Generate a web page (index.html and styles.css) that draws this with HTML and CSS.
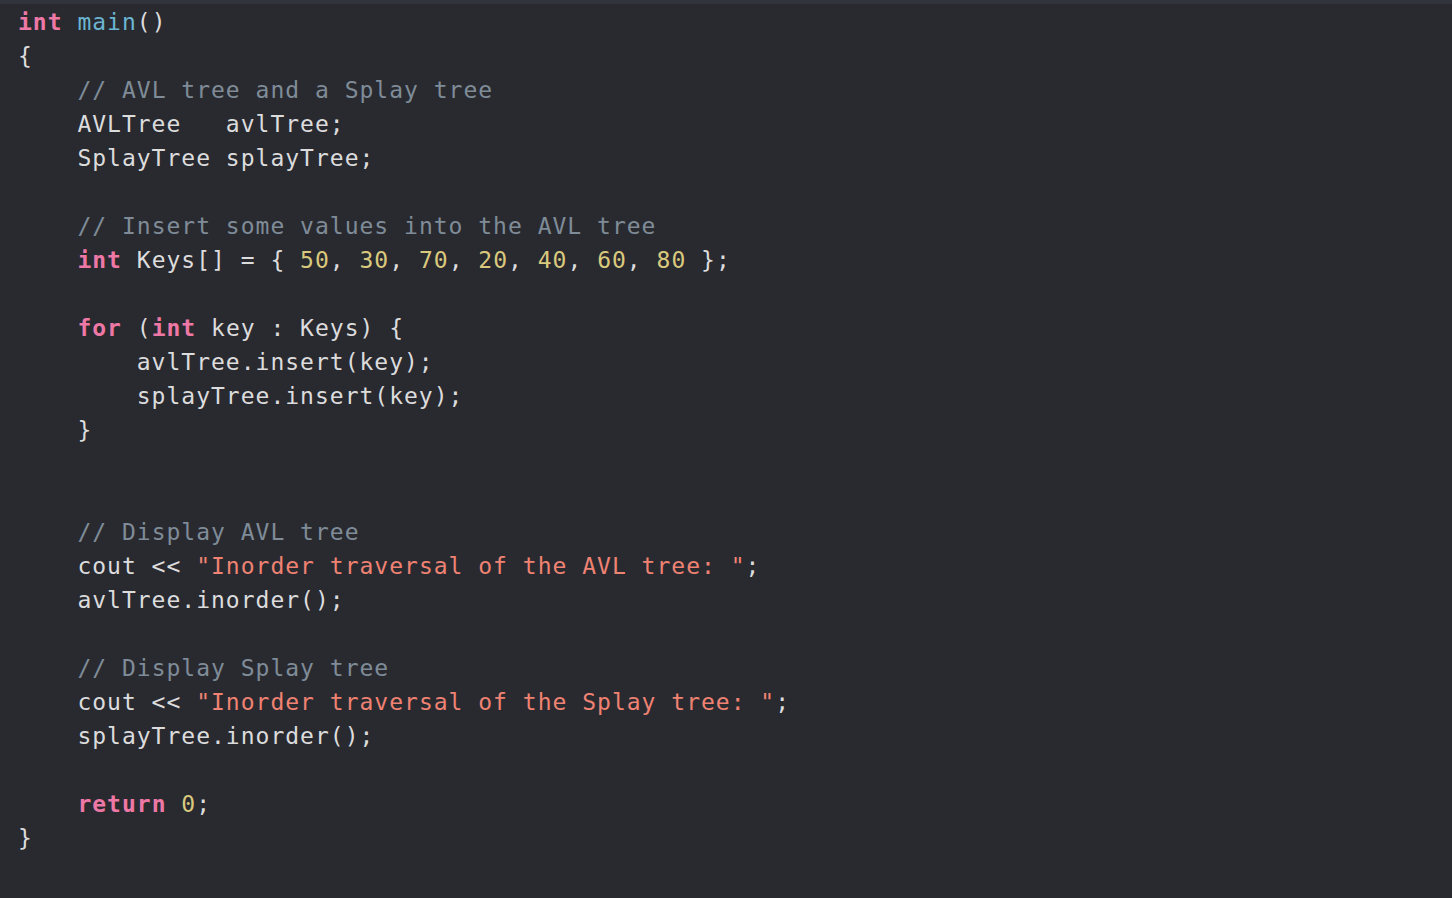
FILE: index.html
```html
<!DOCTYPE html>
<html>
<head>
<meta charset="utf-8">
<link rel="stylesheet" href="styles.css">
</head>
<body>
<div class="topbar"></div>
<pre class="code"><span class="kw">int</span> <span class="fn">main</span>()
{
    <span class="cm">// AVL tree and a Splay tree</span>
    AVLTree   avlTree;
    SplayTree splayTree;

    <span class="cm">// Insert some values into the AVL tree</span>
    <span class="kw">int</span> Keys[] = { <span class="nm">50</span>, <span class="nm">30</span>, <span class="nm">70</span>, <span class="nm">20</span>, <span class="nm">40</span>, <span class="nm">60</span>, <span class="nm">80</span> };

    <span class="kw">for</span> (<span class="kw">int</span> key : Keys) {
        avlTree.insert(key);
        splayTree.insert(key);
    }


    <span class="cm">// Display AVL tree</span>
    cout &lt;&lt; <span class="st">"Inorder traversal of the AVL tree: "</span>;
    avlTree.inorder();

    <span class="cm">// Display Splay tree</span>
    cout &lt;&lt; <span class="st">"Inorder traversal of the Splay tree: "</span>;
    splayTree.inorder();

    <span class="kw">return</span> <span class="nm">0</span>;
}
</pre>
</body>
</html>
```

FILE: styles.css
```css
html, body {
  margin: 0;
  padding: 0;
  background: #292a30;
  height: 100%;
  overflow: hidden;
}
.topbar {
  height: 4px;
  background: #31343b;
}
.code {
  margin: 0;
  padding: 1px 0 0 18px;
  font-family: "DejaVu Sans Mono", "Liberation Mono", monospace;
  font-size: 23px;
  letter-spacing: 1px;
  line-height: 34px;
  color: #dcdcdd;
  white-space: pre;
}
.kw { color: #ee78a5; font-weight: bold; }
.fn { color: #6bb5d2; }
.cm { color: #7f8c98; }
.nm { color: #d9c97c; }
.st { color: #ef8272; }
```
